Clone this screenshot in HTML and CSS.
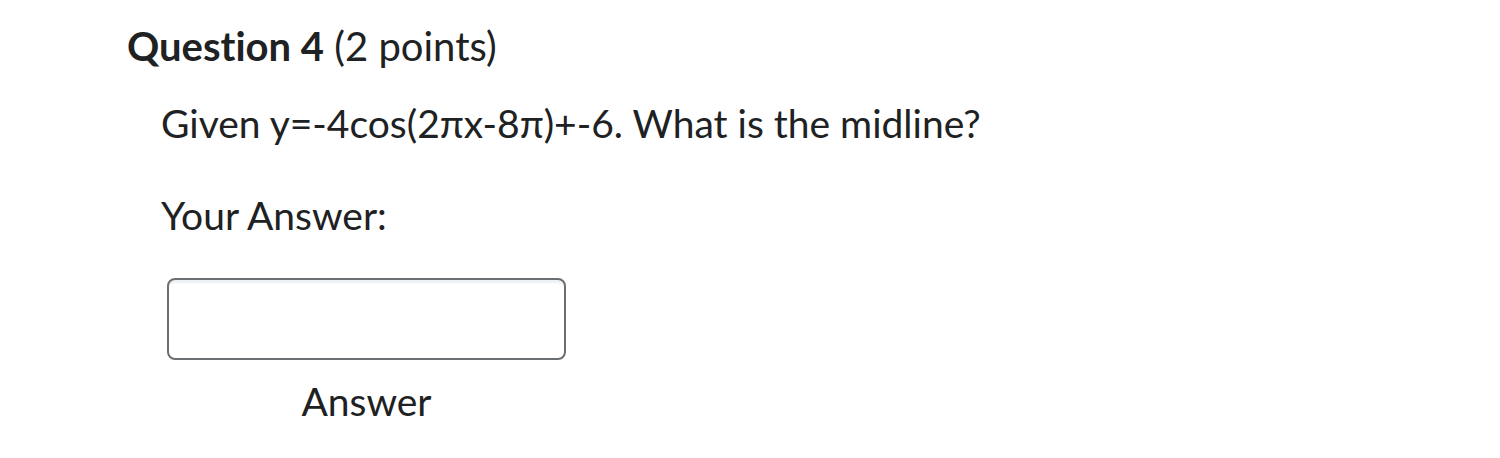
FILE: index.html
```html
<!DOCTYPE html>
<html>
<head>
<meta charset="utf-8">
<link rel="stylesheet" href="styles.css">
</head>
<body>
<div class="question">
  <h2 class="q-title"><span class="q-num">Question 4</span> (2 points)</h2>
  <div class="q-body">
    <p class="q-text">Given y=-4cos(2πx-8π)+-6. What is the midline?</p>
    <p class="q-label">Your Answer:</p>
    <div class="answer">
      <input class="answer-input" type="text" aria-label="Answer">
      <div class="answer-caption">Answer</div>
    </div>
  </div>
</div>
</body>
</html>
```
FILE: styles.css
```css
html, body {
  margin: 0;
  padding: 0;
  background: #ffffff;
}
body {
  font-family: Lato, "Liberation Sans", sans-serif;
  color: #202122;
  font-variant-ligatures: none;
}
.question {
  padding: 22px 0 0 127px;
}
.q-title {
  margin: 0;
  font-size: 40px;
  font-weight: 400;
  line-height: 48px;
}
.q-num {
  font-weight: 700;
}
.q-body {
  padding-left: 34px;
}
.q-text {
  margin: 30px 0 0 0;
  font-size: 39px;
  line-height: 47px;
}
.q-label {
  margin: 45px 0 0 0;
  font-size: 39px;
  line-height: 47px;
}
.answer {
  display: inline-flex;
  flex-direction: column;
  align-items: center;
  margin-top: 39px;
  margin-left: 6px;
}
.answer-input {
  box-sizing: border-box;
  width: 399px;
  height: 82px;
  border: 2px solid #6c6f72;
  border-radius: 8px;
  box-shadow: inset 0 5px 2px -2px #eef1f3;
  background: #ffffff;
  margin: 0;
  padding: 0 10px;
}
.answer-caption {
  margin-top: 18px;
  font-size: 39px;
  line-height: 47px;
}
```
